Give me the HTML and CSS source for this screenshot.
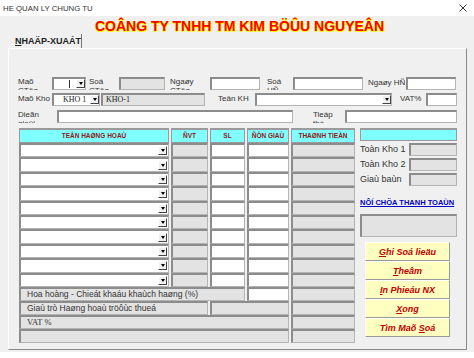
FILE: index.html
```html
<!DOCTYPE html>
<html lang="vi">
<head>
    <meta charset="UTF-8">
    <title>HE QUAN LY CHUNG TU</title>
    <link rel="stylesheet" href="styles.css">
</head>
<body>
    <div class="titlebar">
        <span>HE QUAN LY CHUNG TU</span>
        <svg class="close" width="8" height="8" viewBox="0 0 8 8"><path d="M0.5 0.5L7.5 7.5M7.5 0.5L0.5 7.5" stroke="#333" stroke-width="1"/></svg>
    </div>
    <div class="window">
        <h1 class="company">COÂNG TY TNHH TM KIM BÖÛU NGUYEÂN</h1>
        <div class="tabstrip">
            <div class="tab"><u>N</u>HAÄP-XUAÁT</div>
        </div>
        <div class="page">
            <div class="frow r1">
                <div class="lbl two">Maõ<br>CTöø</div>
                <div class="fld combo"><span class="caret"></span><span class="dd"></span></div>
                <div class="lbl two p3">Soá<br>CTöø</div>
                <div class="fld grey"></div>
                <div class="lbl two p5">Ngaøy<br>CTöø</div>
                <div class="fld"></div>
                <div class="lbl two p7">Soá<br>HÑ</div>
                <div class="fld"></div>
                <div class="lbl p5">Ngaøy HÑ</div>
                <div class="fld"></div>
            </div>
            <div class="frow r2">
                <div class="lbl">Maõ Kho</div>
                <div class="fld combo serif"><span class="val">KHO 1</span><span class="dd"></span></div>
                <div class="fld grey serif ml1">KHO-1</div>
                <div class="lbl p13">Teân KH</div>
                <div class="fld combo"><span class="dd"></span></div>
                <div class="lbl p8">VAT%</div>
                <div class="fld"></div>
            </div>
            <div class="frow r3">
                <div class="lbl two">Dieãn<br>giaûi</div>
                <div class="fld"></div>
                <div class="lbl two p20">Tieáp<br>thò</div>
                <div class="fld"></div>
            </div>
            <div class="main">
                <div class="tbl" id="tbl">
                    <div class="hd">TEÂN HAØNG HOAÙ</div>
                    <div class="hd">ÑVT</div>
                    <div class="hd">SL</div>
                    <div class="hd">ÑÔN GIAÙ</div>
                    <div class="hd">THAØNH TIEÀN</div>
                </div>
                <div class="side">
                    <div class="cyanbar"></div>
                    <div class="srow"><span>Toàn Kho 1</span><div class="fld grey"></div></div>
                    <div class="srow"><span>Toàn Kho 2</span><div class="fld grey"></div></div>
                    <div class="srow"><span>Giaù baùn</span><div class="fld grey"></div></div>
                    <a class="link" href="#">NÔÍ CHÖA THANH TOAÙN</a>
                    <div class="fld grey note"></div>
                    <div class="btns">
                        <button class="btn"><u>G</u>hi Soá lieäu</button>
                        <button class="btn"><u>T</u>heâm</button>
                        <button class="btn"><u>I</u>n Phieáu NX</button>
                        <button class="btn"><u>X</u>ong</button>
                        <button class="btn">Tìm Maõ <u>S</u>oá</button>
                    </div>
                </div>
            </div>
        </div>
    </div>
    <script>
        const tbl = document.getElementById("tbl");
        for (let i = 0; i < 10; i++) {
            tbl.insertAdjacentHTML("beforeend", `
                <div class="c combo"><span class="dd"></span></div>
                <div class="c g"></div>
                <div class="c"></div>
                <div class="c"></div>
                <div class="c g"></div>`);
        }
        tbl.insertAdjacentHTML("beforeend", `
            <div class="c g s3 txt">Hoa hoàng - Chieát khaáu khaùch haøng (%)</div>
            <div class="c"></div>
            <div class="c g"></div>
            <div class="c g s2 txt">Giaù trò Haøng hoaù tröôùc thueá</div>
            <div class="c g s2"></div>
            <div class="c g"></div>
            <div class="c g s4 txt serif">VAT %</div>
            <div class="c g"></div>
            <div class="c g s4"></div>
            <div class="c g"></div>`);
    </script>
</body>
</html>
```

FILE: styles.css
```css
* { box-sizing: border-box; }
body { margin: 0; width: 474px; height: 358px; overflow: hidden; background: #fff; font-family: "Liberation Sans", Arial, sans-serif; font-size: 8px; color: #222; }
.serif { font-family: "Liberation Serif", "Times New Roman", serif; }

.titlebar { height: 16px; display: flex; justify-content: space-between; align-items: center; padding: 0 7px 0 3px; font-size: 7.8px; color: #333; background: #fff; }
.window { height: 336px; background: #f0f0f0; }
.company { margin: 0; padding: 2px 0 0 5px; height: 18px; text-align: center; font-size: 14px; line-height: 16px; font-weight: bold; color: #f00; text-shadow: 1px 1px 0 #ff0, 1px 0 0 #ff0, 0 1px 0 #ff0; }
.tabstrip { height: 14px; display: flex; }
.tab { width: 82px; padding-left: 15px; border-right: 1px solid #777; font-size: 9px; font-weight: bold; line-height: 14px; color: #222; }

.page { margin-left: 8px; width: 459px; height: 302px; padding-top: 27px; border: 1px solid; border-color: #fff #8a8a8a #8a8a8a #fff; }

.frow { display: grid; height: 14px; padding-left: 9px; align-items: center; }
.r1 { grid-template-columns: 34px 34px 33px 46px 45px 50px 33px 70px 43px 50px; }
.r2 { grid-template-columns: 34px 48px 105px 50px 137px 34px 31px; margin-top: 2px; }
.r3 { grid-template-columns: 39px 236px 52px 112px; margin-top: 3px; }

.lbl { height: 14px; line-height: 14px; overflow: hidden; white-space: nowrap; color: #333; }
.lbl.two { line-height: 9px; padding-top: 1px; }
.p3 { padding-left: 3px; }
.p5 { padding-left: 5px; }
.p7 { padding-left: 7px; }
.p8 { padding-left: 8px; }
.p13 { padding-left: 13px; }
.p20 { padding-left: 20px; }
.ml1 { margin-left: 1px; }

.fld { height: 13px; background: #fff; border: 1px solid #b4b4b4; border-top: 2px solid #8c8c8c; border-left: 2px solid #8c8c8c; line-height: 10px; padding-left: 3px; white-space: nowrap; overflow: hidden; }
.fld.grey { background: #e3e3e3; }
.r2 .serif { font-size: 8px; }

.combo { display: flex; align-items: center; }
.combo .val { flex: 1; padding-left: 6px; }
.caret { width: 1px; height: 8px; background: #333; margin-left: 12px; }
.dd { margin-left: auto; width: 9px; height: 9px; flex: none; background: #f0f0f0; border: 1px solid; border-color: #fff #444 #444 #fff; display: flex; align-items: center; justify-content: center; }
.dd::after { content: ""; border-left: 2px solid transparent; border-right: 2px solid transparent; border-top: 3px solid #000; }

.main { display: flex; margin: 5px 0 0 10px; }
.tbl { display: grid; grid-template-columns: 150px 37px 35px 42px 64px; column-gap: 2px; grid-template-rows: 15px repeat(10, 14.4px) repeat(4, 14px); width: 336px; align-content: start; }
.hd { background: #80ffff; border: 1px solid #9a9a9a; border-top-width: 2px; text-align: center; font-size: 6.5px; font-weight: bold; color: #8b1a1a; line-height: 11px; white-space: nowrap; }
.c { background: #fff; border: 1px solid #b4b4b4; border-top: 2px solid #8c8c8c; border-left: 2px solid #8c8c8c; }
.c.g { background: #e3e3e3; }
.c.combo { padding-right: 1px; }
.s2 { grid-column: span 2; }
.s3 { grid-column: span 3; }
.s4 { grid-column: span 4; }
.txt { padding-left: 6px; line-height: 10px; font-size: 8.5px; color: #333; white-space: nowrap; }

.side { width: 97px; margin-left: 5px; }
.cyanbar { height: 13px; background: #80ffff; border: 1px solid #9a9a9a; border-top-width: 2px; }
.srow { display: flex; align-items: center; height: 14px; margin-top: 1px; font-size: 9px; color: #333; }
.srow:first-of-type { margin-top: 2px; }
.srow span { flex: 1; }
.srow .fld { width: 48px; }
.link { display: block; margin-top: 12px; height: 11px; font-size: 7.5px; font-weight: bold; color: #0000c8; white-space: nowrap; }
.note { height: 23px; margin-top: 5px; }
.btns { display: flex; flex-direction: column; margin: 5px 0 0 5px; width: 85px; }
.btn { height: 19px; margin: 0; padding: 0; background: #ffffc0; border: 1px solid; border-color: #fff #9a9a9a #9a9a9a #fff; font-family: "Liberation Sans", Arial, sans-serif; font-size: 9px; font-weight: bold; font-style: italic; color: #c00000; cursor: pointer; }
```
